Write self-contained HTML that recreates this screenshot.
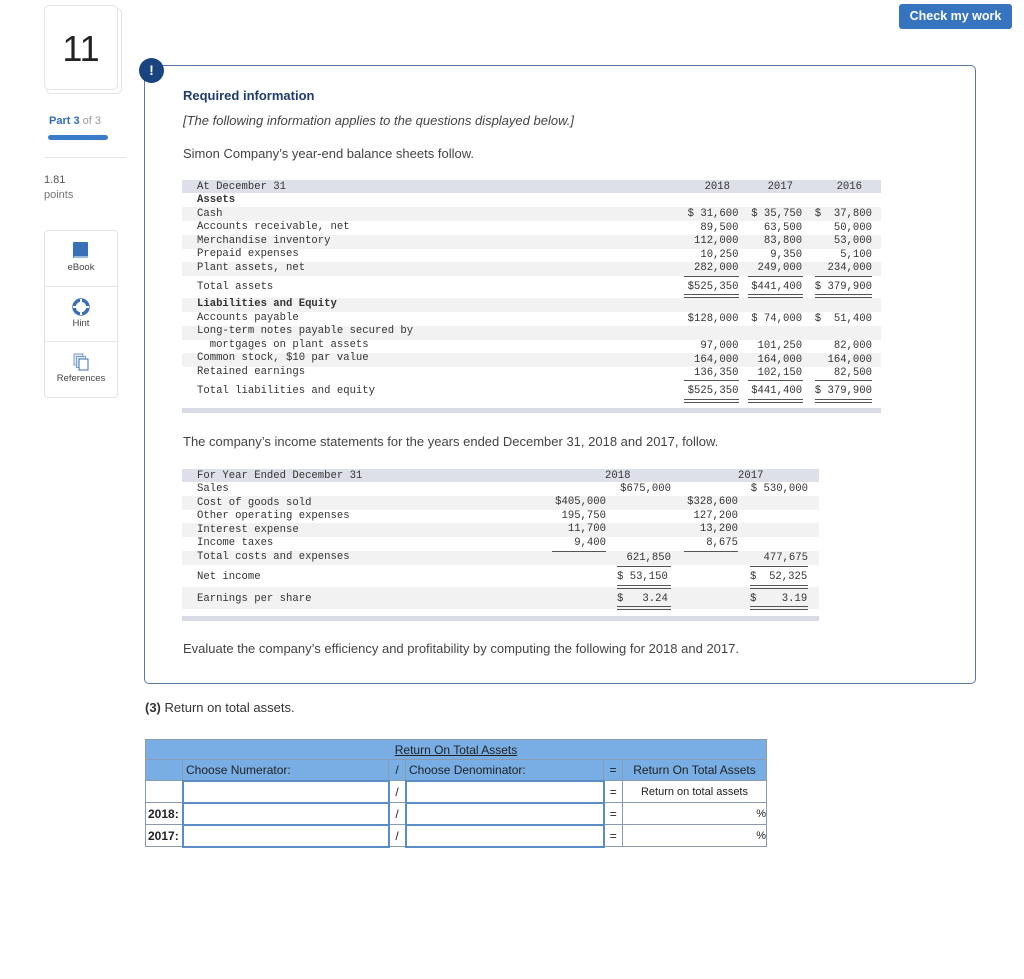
<!DOCTYPE html>
<html><head><meta charset="utf-8"><style>
*{margin:0;padding:0;box-sizing:border-box}
body{width:1024px;height:979px;background:#fff;position:relative;font-family:"Liberation Sans",sans-serif;color:#333;overflow:hidden}
.a{position:absolute;white-space:pre}
.m{font-family:"Liberation Mono",monospace;font-size:10.6px;color:#333;line-height:13px}
.r{text-align:right}
.bg{position:absolute;background:#f2f2f2}
.hd{position:absolute;background:#dde0e8}
.ul{position:absolute;height:1px;background:#555}
.dl{position:absolute;height:4px;border-top:1px solid #555;border-bottom:1px solid #555}
.bt td{border:1px solid #8a9bb0}
</style></head><body>
<div class="a" style="left:899px;top:4px;width:113px;height:25px;background:#3674bf;border-radius:3px;color:#fff;font-weight:bold;font-size:12.5px;text-align:center;line-height:25px">Check my work</div>

<div class="a" style="left:46px;top:8px;width:76px;height:86px;border:1px solid #e4e4e4;border-radius:5px"></div>
<div class="a" style="left:44px;top:5px;width:74px;height:85px;border:1px solid #e4e4e4;border-radius:5px;background:#fff;font-size:36px;color:#222;text-align:center;line-height:85px">11</div>
<div class="a" style="left:49px;top:115px;font-size:11px;color:#999"><b style="color:#2d6bb5">Part 3</b> of 3</div>
<div class="a" style="left:48px;top:135px;width:60px;height:5px;border-radius:3px;background:#3a7cc8"></div>
<div class="a" style="left:44px;top:157px;width:82px;height:1px;background:#e6e6e6"></div>
<div class="a" style="left:44px;top:174px;font-size:11px;color:#555">1.81</div>
<div class="a" style="left:44px;top:189px;font-size:11px;color:#777">points</div>
<div class="a" style="left:44px;top:230px;width:74px;height:168px;border:1px solid #e2e2e2;border-radius:4px"></div>
<div class="a" style="left:45px;top:286px;width:72px;height:1px;background:#e6e6e6"></div>
<div class="a" style="left:45px;top:341px;width:72px;height:1px;background:#e6e6e6"></div>
<div class="a" style="left:73px;top:242px;width:15px;height:16px;background:#3a70b8;border-radius:1px"></div>
<div class="a" style="left:74px;top:256px;width:14px;height:2px;background:#9bb8e0"></div>
<div class="a" style="left:44px;top:262px;width:74px;text-align:center;font-size:9.5px;color:#444">eBook</div>
<svg class="a" style="left:72px;top:298px" width="18" height="18" viewBox="0 0 18 18"><circle cx="9" cy="9" r="7" fill="none" stroke="#3a70b8" stroke-width="3.5"/><path d="M9 1v4M9 13v4M1 9h4M13 9h4" stroke="#fff" stroke-width="2"/></svg>
<div class="a" style="left:44px;top:318px;width:74px;text-align:center;font-size:9.5px;color:#444">Hint</div>
<svg class="a" style="left:73px;top:353px" width="17" height="18" viewBox="0 0 17 18"><rect x="1" y="1" width="9" height="11" fill="#dfe8f5" stroke="#7aa0d0"/><rect x="3.5" y="3.5" width="9" height="11" fill="#dfe8f5" stroke="#7aa0d0"/><rect x="6" y="6" width="9" height="11" fill="#fff" stroke="#3a70b8"/></svg>
<div class="a" style="left:44px;top:373px;width:74px;text-align:center;font-size:9.5px;color:#444">References</div>

<div class="a" style="left:144px;top:65px;width:832px;height:619px;border:1px solid #5a7aa6;border-radius:5px"></div>
<div class="a" style="left:139px;top:58px;width:25px;height:25px;border-radius:50%;background:#1a4480;color:#fff;font-weight:bold;font-size:14px;text-align:center;line-height:25px">!</div>
<div class="a" style="left:183px;top:88px;font-size:13px;font-weight:bold;color:#1e3d6e">Required information</div>
<div class="a" style="left:183px;top:113px;font-size:13px;font-style:italic;color:#444">[The following information applies to the questions displayed below.]</div>
<div class="a" style="left:183px;top:146px;font-size:13px;color:#444">Simon Company’s year-end balance sheets follow.</div>

<!-- balance sheet -->
<div class="hd" style="left:182px;top:180px;width:699px;height:13px"></div>
<div class="bg" style="left:182px;top:207px;width:699px;height:14px"></div>
<div class="bg" style="left:182px;top:235px;width:699px;height:14px"></div>
<div class="bg" style="left:182px;top:262px;width:699px;height:14px"></div>
<div class="bg" style="left:182px;top:298px;width:699px;height:14px"></div>
<div class="bg" style="left:182px;top:326px;width:699px;height:14px"></div>
<div class="bg" style="left:182px;top:353px;width:699px;height:14px"></div>
<div class="hd" style="left:182px;top:408px;width:699px;height:5px;background:#d8dbe3"></div>
<div class="a m" style="left:197px;top:181px">At December 31</div>
<div class="a m r" style="left:668px;top:181px;width:62px">2018</div>
<div class="a m r" style="left:730px;top:181px;width:63px">2017</div>
<div class="a m r" style="left:800px;top:181px;width:62px">2016</div>
<div class="a m" style="left:197px;top:194px;line-height:13.6px"><b>Assets</b>
Cash
Accounts receivable, net
Merchandise inventory
Prepaid expenses
Plant assets, net</div>
<div class="a m" style="left:197px;top:281px">Total assets</div>
<div class="a m" style="left:197px;top:298px;line-height:13.6px"><b>Liabilities and Equity</b>
Accounts payable
Long-term notes payable secured by
  mortgages on plant assets
Common stock, $10 par value
Retained earnings</div>
<div class="a m" style="left:197px;top:385px">Total liabilities and equity</div>
<div class="a m r" style="left:660px;top:208px;width:212px;line-height:13.6px">$ 31,600  $ 35,750  $  37,800
  89,500    63,500     50,000
 112,000    83,800     53,000
  10,250     9,350      5,100
 282,000   249,000    234,000</div>
<div class="ul" style="left:684px;top:276px;width:55px"></div><div class="ul" style="left:748px;top:276px;width:55px"></div><div class="ul" style="left:815px;top:276px;width:57px"></div>
<div class="a m r" style="left:660px;top:281px;width:212px">$525,350  $441,400  $ 379,900</div>
<div class="dl" style="left:684px;top:294px;width:55px"></div><div class="dl" style="left:748px;top:294px;width:55px"></div><div class="dl" style="left:815px;top:294px;width:57px"></div>
<div class="a m r" style="left:660px;top:313px;width:212px">$128,000  $ 74,000  $  51,400</div>
<div class="a m r" style="left:660px;top:340px;width:212px;line-height:13.6px">  97,000   101,250     82,000
 164,000   164,000    164,000
 136,350   102,150     82,500</div>
<div class="ul" style="left:684px;top:380px;width:55px"></div><div class="ul" style="left:748px;top:380px;width:55px"></div><div class="ul" style="left:815px;top:380px;width:57px"></div>
<div class="a m r" style="left:660px;top:385px;width:212px">$525,350  $441,400  $ 379,900</div>
<div class="dl" style="left:684px;top:399px;width:55px"></div><div class="dl" style="left:748px;top:399px;width:55px"></div><div class="dl" style="left:815px;top:399px;width:57px"></div>

<div class="a" style="left:183px;top:434px;font-size:13px;color:#444">The company’s income statements for the years ended December 31, 2018 and 2017, follow.</div>

<!-- income statement -->
<div class="hd" style="left:182px;top:469px;width:637px;height:13px"></div>
<div class="bg" style="left:182px;top:496px;width:637px;height:14px"></div>
<div class="bg" style="left:182px;top:523px;width:637px;height:14px"></div>
<div class="bg" style="left:182px;top:551px;width:637px;height:14px"></div>
<div class="bg" style="left:182px;top:587px;width:637px;height:22px"></div>
<div class="hd" style="left:182px;top:616px;width:637px;height:5px;background:#d8dbe3"></div>
<div class="a m" style="left:197px;top:470px">For Year Ended December 31</div>
<div class="a m" style="left:605px;top:470px">2018</div>
<div class="a m" style="left:738px;top:470px">2017</div>
<div class="a m" style="left:197px;top:483px;line-height:13.6px">Sales
Cost of goods sold
Other operating expenses
Interest expense
Income taxes
Total costs and expenses</div>
<div class="a m" style="left:197px;top:571px">Net income</div>
<div class="a m" style="left:197px;top:593px">Earnings per share</div>
<div class="a m r" style="left:540px;top:496px;width:66px;line-height:13.6px">$405,000
195,750
11,700
9,400</div>
<div class="ul" style="left:552px;top:551px;width:54px"></div>
<div class="a m r" style="left:672px;top:496px;width:66px;line-height:13.6px">$328,600
127,200
13,200
8,675</div>
<div class="ul" style="left:684px;top:551px;width:54px"></div>
<div class="a m r" style="left:600px;top:483px;width:71px">$675,000</div>
<div class="a m r" style="left:730px;top:483px;width:78px">$ 530,000</div>
<div class="a m r" style="left:600px;top:552px;width:71px">621,850</div>
<div class="a m r" style="left:730px;top:552px;width:78px">477,675</div>
<div class="ul" style="left:617px;top:566px;width:54px"></div><div class="ul" style="left:750px;top:566px;width:58px"></div>
<div class="a m" style="left:617px;top:571px">$ 53,150</div>
<div class="a m" style="left:750px;top:571px">$  52,325</div>
<div class="dl" style="left:617px;top:585px;width:54px"></div><div class="dl" style="left:750px;top:585px;width:58px"></div>
<div class="a m" style="left:617px;top:593px">$   3.24</div>
<div class="a m" style="left:750px;top:593px">$    3.19</div>
<div class="dl" style="left:617px;top:606px;width:54px"></div><div class="dl" style="left:750px;top:606px;width:58px"></div>

<div class="a" style="left:183px;top:641px;font-size:13px;color:#444">Evaluate the company’s efficiency and profitability by computing the following for 2018 and 2017.</div>
<div class="a" style="left:145px;top:700px;font-size:13px;color:#333"><b>(3)</b> Return on total assets.</div>

<table class="a bt" style="left:145px;top:739px;border-collapse:collapse;font-size:12px;color:#222;font-family:'Liberation Sans',sans-serif">
<tr style="height:20px;background:#79aee5"><td colspan="6" style="text-align:center"><u>Return On Total Assets</u></td></tr>
<tr style="height:21px;background:#79aee5"><td style="width:37px"></td><td style="width:206px;padding-left:3px">Choose Numerator:</td><td style="width:17px;text-align:center">/</td><td style="width:198px;padding-left:3px">Choose Denominator:</td><td style="width:19px;text-align:center">=</td><td style="width:144px;text-align:center">Return On Total Assets</td></tr>
<tr style="height:22px"><td></td><td style="border:2px solid #5a8cc8"></td><td style="text-align:center">/</td><td style="border:2px solid #5a8cc8"></td><td style="text-align:center">=</td><td style="text-align:center;font-size:11px">Return on total assets</td></tr>
<tr style="height:22px"><td style="font-weight:bold;padding-left:2px">2018:</td><td style="border:2px solid #5a8cc8"></td><td style="text-align:center">/</td><td style="border:2px solid #5a8cc8"></td><td style="text-align:center">=</td><td style="text-align:right;font-size:11px">%</td></tr>
<tr style="height:22px"><td style="font-weight:bold;padding-left:2px">2017:</td><td style="border:2px solid #5a8cc8"></td><td style="text-align:center">/</td><td style="border:2px solid #5a8cc8"></td><td style="text-align:center">=</td><td style="text-align:right;font-size:11px">%</td></tr>
</table>
</body></html>
